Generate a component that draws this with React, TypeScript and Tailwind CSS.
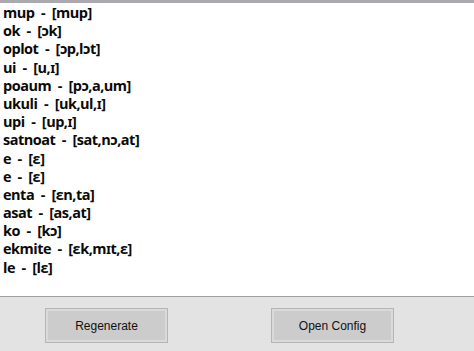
const rows = [
  "mup  -  [mup]",
  "ok  -  [ɔk]",
  "oplot  -  [ɔp,lɔt]",
  "ui  -  [u,ɪ]",
  "poaum  -  [pɔ,a,um]",
  "ukuli  -  [uk,ul,ɪ]",
  "upi  -  [up,ɪ]",
  "satnoat  -  [sat,nɔ,at]",
  "e  -  [ɛ]",
  "e  -  [ɛ]",
  "enta  -  [ɛn,ta]",
  "asat  -  [as,at]",
  "ko  -  [kɔ]",
  "ekmite  -  [ɛk,mɪt,ɛ]",
  "le  -  [lɛ]",
];

export default function App() {
  return (
    <div className="w-[474px] h-[351px] flex flex-col bg-[#e3e3e3] overflow-hidden">
      {/* word list */}
      <div className="h-[297px] bg-white border-t-[3px] border-t-[#a9a9ae] border-b border-b-[#a0a0a0] pl-[3px] pt-[1px]">
        {rows.map((r, i) => (
          <div
            key={i}
            className="h-[18.2px] leading-[18px] text-[14.5px] font-bold text-[#0a0a0a] whitespace-pre tracking-[-0.5px]"
            style={{ fontFamily: '"Open Sans", "Noto Sans", sans-serif' }}
          >
            {r}
          </div>
        ))}
      </div>

      {/* buttons */}
      <div className="flex-1 flex items-start pt-[12px] pl-[46px] gap-[105px]">
        <button
          className="w-[121px] h-[33px] bg-[#cccccc] border-2 border-[#dadada] outline outline-1 outline-[#b5b5b5] text-[12px] text-[#111]"
          style={{ fontFamily: '"Liberation Sans", Arial, sans-serif' }}
        >
          Regenerate
        </button>
        <button
          className="w-[121px] h-[33px] bg-[#cccccc] border-2 border-[#dadada] outline outline-1 outline-[#b5b5b5] text-[12px] text-[#111]"
          style={{ fontFamily: '"Liberation Sans", Arial, sans-serif' }}
        >
          Open Config
        </button>
      </div>
    </div>
  );
}
